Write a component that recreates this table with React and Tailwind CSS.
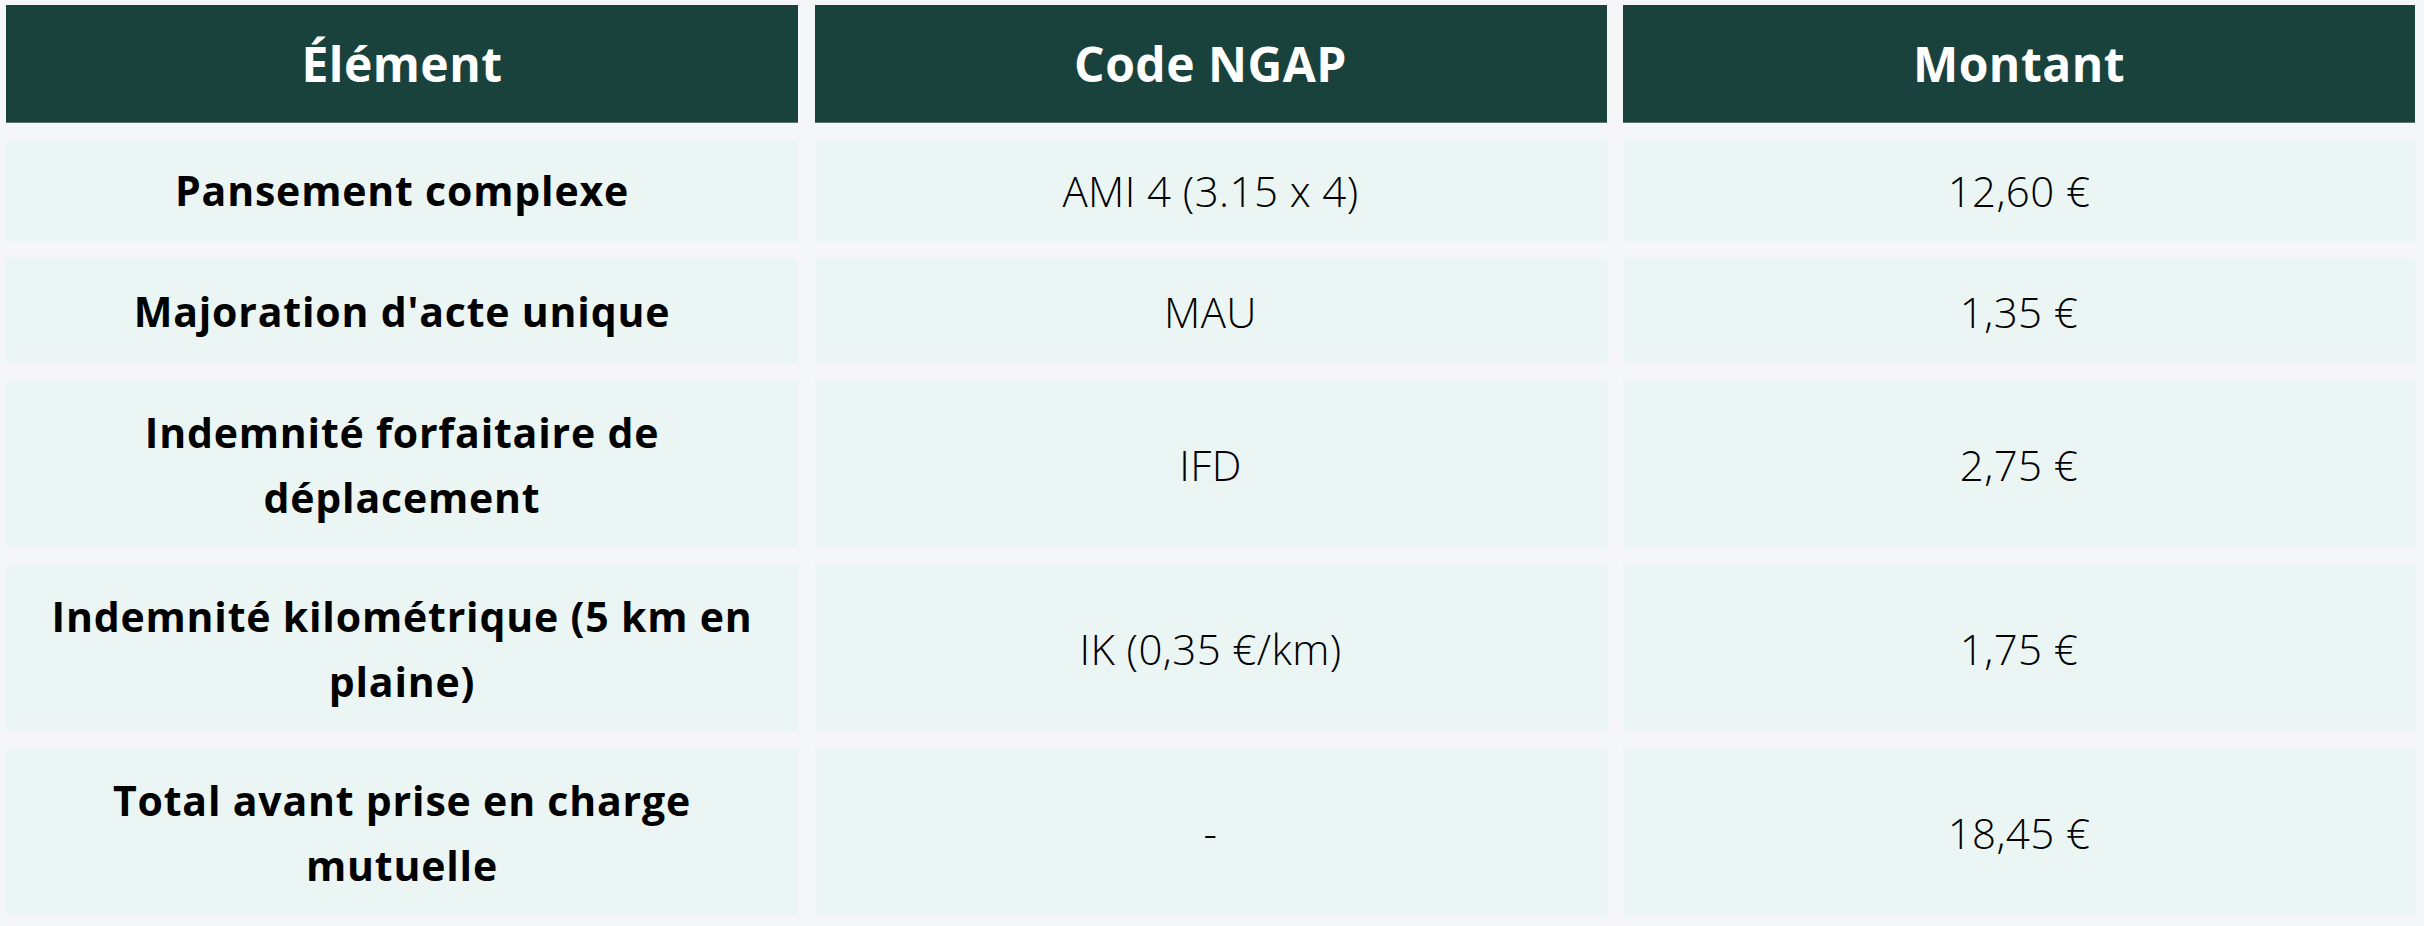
import React from "react";

const rows = [
  { el: ["Pansement complexe"], code: "AMI 4 (3.15 x 4)", amt: "12,60 €", h: "h-[101px]" },
  { el: ["Majoration d'acte unique"], code: "MAU", amt: "1,35 €", h: "h-[106px]" },
  { el: ["Indemnité forfaitaire de", "déplacement"], code: "IFD", amt: "2,75 €", h: "h-[167px]" },
  { el: ["Indemnité kilométrique (5 km en", "plaine)"], code: "IK (0,35 €/km)", amt: "1,75 €", h: "h-[167px]" },
  { el: ["Total avant prise en charge", "mutuelle"], code: "-", amt: "18,45 €", h: "h-[167px]" },
];

export default function App() {
  return (
    <div className="w-[2424px] h-[926px] bg-[#f5f6f8] pl-[6px] pt-[5px] font-['Open_Sans',sans-serif]">
      <div className="grid grid-cols-[792px_792px_792px] gap-x-[16.5px] gap-y-[17px]">
        {["Élément", "Code NGAP", "Montant"].map((t) => (
          <div
            key={t}
            className="h-[118px] bg-[#1a423d] border-b border-[#5f716d] flex items-center justify-center text-white font-bold text-[48px] leading-none tracking-[0.01em]"
          >
            {t}
          </div>
        ))}
        {rows.map((r, i) => (
          <React.Fragment key={i}>
            <div className={`${r.h} bg-[#ebf5f3] flex flex-col items-center justify-center text-black font-bold text-[41px] tracking-[0.02em] leading-[65px] text-center`}>
              {r.el.map((l) => (
                <span key={l}>{l}</span>
              ))}
            </div>
            <div className={`${r.h} bg-[#ebf5f3] flex items-center justify-center text-black font-light text-[42px] tracking-[0.01em] leading-[65px] whitespace-pre`}>
              {r.code}
            </div>
            <div className={`${r.h} bg-[#ebf5f3] flex items-center justify-center text-black font-light text-[42px] tracking-[0.01em] leading-[65px]`}>
              {r.amt}
            </div>
          </React.Fragment>
        ))}
      </div>
    </div>
  );
}
